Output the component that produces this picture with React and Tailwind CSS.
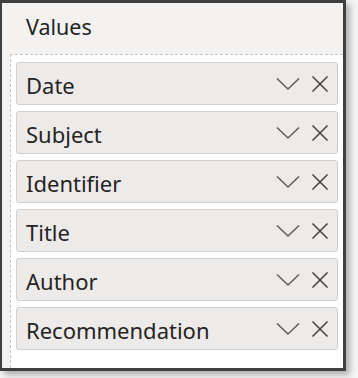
const FIELDS = ["Date", "Subject", "Identifier", "Title", "Author", "Recommendation"];

function Chevron() {
    return (
        <svg width="24" height="14" viewBox="0 0 24 14" fill="none">
            <polyline points="1,1.5 12,12 23,1.5" stroke="#605e5c" strokeWidth="1.6" />
        </svg>
    );
}

function Cross() {
    return (
        <svg width="18" height="18" viewBox="0 0 18 18" fill="none">
            <line x1="1.5" y1="1.5" x2="16.5" y2="16.5" stroke="#484644" strokeWidth="1.6" />
            <line x1="16.5" y1="1.5" x2="1.5" y2="16.5" stroke="#484644" strokeWidth="1.6" />
        </svg>
    );
}

function FieldWell({ name }) {
    return (
        <div className="h-[43px] flex items-center justify-between pl-[9px] pr-[8px] bg-[#edebe9] border border-[#d2d0ce] rounded-[3px]">
            <span className="text-[22px] text-[#252423] leading-none pt-[2px]">{name}</span>
            <div className="flex items-center gap-[11px]">
                <Chevron />
                <Cross />
            </div>
        </div>
    );
}

export default function App() {
    return (
        <div
            className="w-[358px] h-[378px] bg-[#f4f4f4] overflow-hidden"
            style={{ fontFamily: '"Noto Sans", "Open Sans", sans-serif' }}
        >
            {/* PANEL */}

            <div className="w-[346px] h-[371px] flex flex-col bg-[#f3f2f1] border-[3px] border-l-2 border-[#3f3f3f] shadow-[4px_4px_6px_rgba(0,0,0,0.28)]">

                {/* HEADER */}

                <div className="h-[51px] shrink-0 pl-[24px] pt-[12px] text-[21.5px] text-[#252423] leading-[24px]">
                    Values
                </div>

                {/* DROP AREA */}

                <div className="flex-1 ml-[8px] bg-white border-t border-l border-dashed border-[#c8c6c4] pt-[7px] pl-[5px] pr-[5px] flex flex-col gap-[6px]">
                    {FIELDS.map((f) => (
                        <FieldWell key={f} name={f} />
                    ))}
                </div>

            </div>
        </div>
    );
}
